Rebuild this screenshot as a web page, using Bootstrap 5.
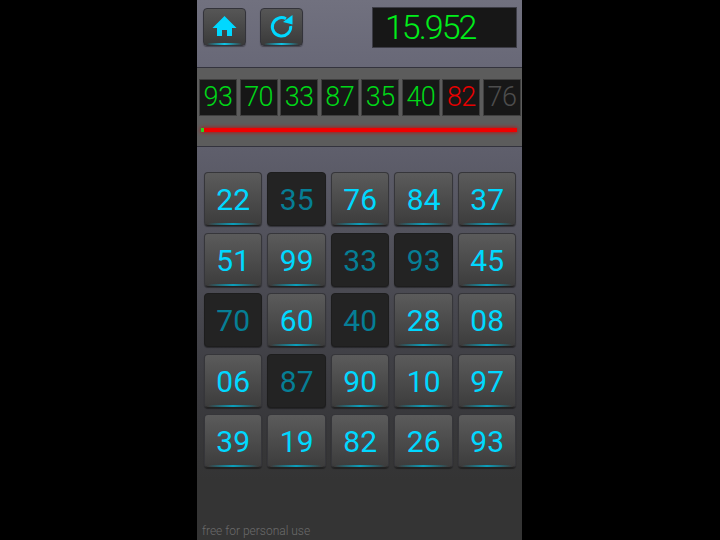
<!DOCTYPE html>
<html lang="en">
<head>
<meta charset="utf-8">
<title>Number game</title>
<link rel="stylesheet" href="https://cdn.jsdelivr.net/npm/bootstrap@5.3.0/dist/css/bootstrap.min.css">
<style>
html,body{height:100%;background:#000;overflow:hidden}
.phone{width:325px;height:540px;margin-left:197px;font-family:Roboto,sans-serif;background:linear-gradient(#5f5f6c 147px,#3a3a3e 400px,#343434 480px)}
.topbar{height:67px;padding:8px 5px 0 6px;background:linear-gradient(#71717f,#686877)}
.tool{width:43px;height:38px;padding:0;margin-right:14px;border:1px solid #33333a;border-radius:4px;background:linear-gradient(90deg,transparent 8%,#0fc4e6 50%,transparent 92%) bottom/100% 2px no-repeat,linear-gradient(#565656,#3a3a3a);box-shadow:0 1px 1px rgba(0,0,0,.35)}
.tool svg{width:30px;height:30px;display:block;margin:auto}
.lcd-main{width:145px;height:41px;margin-top:-1px;background:#171717;border:1px solid #3c3c45;color:#00ee1a;font-weight:300;font-size:34px;line-height:39px;letter-spacing:-2px;padding-left:12px}
.band{height:80px;padding:11px 1px 0 2px;background:#5c5c5c;border-top:1px solid #33333d;border-bottom:1px solid #33333d}
.cell{width:38px;height:37px;background:#171717;border:1px solid #3f3f3f;color:#00d818;font-weight:300;font-size:27px;line-height:35px;letter-spacing:-.6px;text-align:center}
.cell.miss{color:#e80000}
.cell.idle{color:#4d4d4d}
.meter{height:4px;margin:12px 4px 0 2px;background:linear-gradient(90deg,#2fd11f 3px,#ee0000 3px);box-shadow:0 0 4px #d00000}
.board{display:grid;grid-template-columns:repeat(5,58.4px);column-gap:5.1px;row-gap:6.5px;padding:25px 0 0 7px}
.tile{height:54px;padding:2px 0 0;border:1px solid #36363a;border-bottom-color:#222;border-radius:4px;color:#00d8ff;font-size:30px;line-height:1;background:linear-gradient(90deg,transparent 6%,#0a9fbc 50%,transparent 94%) bottom/100% 2px no-repeat,linear-gradient(#5b5b5b,#3c3c3c);box-shadow:0 1px 1px rgba(0,0,0,.4)}
.tile:disabled{opacity:1;color:#067e95;background:#232323;border-color:#1d1d1d}
.credit{color:#6b6b6b;font-size:12px;font-weight:300;padding:0 0 1px 5px;line-height:16px}
</style>
</head>
<body>
<div class="phone d-flex flex-column">
  <div class="topbar d-flex align-items-start">
    <button class="btn tool" type="button" aria-label="Home"><svg viewBox="0 0 30 30"><path fill="#00d8ff" d="M14.5 4 26.5 16H22V24H17V18H12V24H7V16H2.5Z"/></svg></button>
    <button class="btn tool" type="button" aria-label="Restart"><svg viewBox="0 0 30 30"><path fill="none" stroke="#00d8ff" stroke-width="3" d="M19 6.8A9.2 9.2 0 1 0 23.7 14"/><path fill="#00d8ff" d="M16 10 25.5 12.5 25.5 3Z"/></svg></button>
    <div class="lcd-main ms-auto">15.952</div>
  </div>
  <div class="band">
    <div class="d-flex justify-content-between">
      <div class="cell">93</div><div class="cell">70</div><div class="cell">33</div><div class="cell">87</div><div class="cell">35</div><div class="cell">40</div><div class="cell miss">82</div><div class="cell idle">76</div>
    </div>
    <div class="meter"></div>
  </div>
  <div class="board">
    <button class="btn tile">22</button><button class="btn tile" disabled>35</button><button class="btn tile">76</button><button class="btn tile">84</button><button class="btn tile">37</button>
    <button class="btn tile">51</button><button class="btn tile">99</button><button class="btn tile" disabled>33</button><button class="btn tile" disabled>93</button><button class="btn tile">45</button>
    <button class="btn tile" disabled>70</button><button class="btn tile">60</button><button class="btn tile" disabled>40</button><button class="btn tile">28</button><button class="btn tile">08</button>
    <button class="btn tile">06</button><button class="btn tile" disabled>87</button><button class="btn tile">90</button><button class="btn tile">10</button><button class="btn tile">97</button>
    <button class="btn tile">39</button><button class="btn tile">19</button><button class="btn tile">82</button><button class="btn tile">26</button><button class="btn tile">93</button>
  </div>
  <div class="credit mt-auto">free for personal use</div>
</div>
<script src="https://cdn.jsdelivr.net/npm/bootstrap@5.3.0/dist/js/bootstrap.bundle.min.js"></script>
</body>
</html>
